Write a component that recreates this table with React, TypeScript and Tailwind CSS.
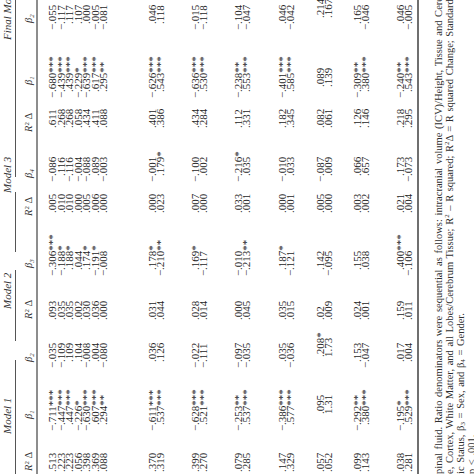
import React from "react";

type Row = string[];

const groups: { mt: string; rows: Row[] }[] = [
  {
    mt: "mt-[10px]",
    rows: [
      [".513", "−.711***", "−.035", ".093", "−.306***", ".005", "−.086", ".611", "−.680***", "−.055"],
      [".223", "−.447***", "−.109", ".035", "−.188*", ".010", ".116", ".268", "−.439***", "−.117"],
      [".223", ".447***", ".109", ".035", ".188*", ".010", "−.116", ".268", ".439***", ".117"],
      [".056", "−.226*", ".104", ".002", ".044", ".000", "−.004", ".058", "−.229*", ".107"],
      [".398", "−.630***", "−.008", ".030", ".174*", ".005", "−.088", ".434", "−.639***", ".000"],
      [".369", ".607***", ".004", ".036", "−.191*", ".006", ".089", ".411", ".617***", "−.005"],
      [".088", ".294**", "−.080", ".000", "−.008", ".000", "−.003", ".088", ".295**", "−.081"],
    ],
  },
  {
    mt: "mt-[40px]",
    rows: [
      [".370", "−.611***", ".036", ".031", ".178*", ".000", "−.001", ".401", "−.626***", ".046"],
      [".319", ".537***", ".126", ".044", "−.210**", ".023", ".179*", ".386", ".543***", ".118"],
    ],
  },
  {
    mt: "mt-[26px]",
    rows: [
      [".399", "−.628***", "−.022", ".028", ".169*", ".007", "−.100", ".434", "−.636***", "−.015"],
      [".270", ".521***", "−.111", ".014", "−.117", ".000", ".002", ".284", ".530***", "−.118"],
    ],
  },
  {
    mt: "mt-[26px]",
    rows: [
      [".079", "−.253**", "−.097", ".000", "−.010", ".033", "−.216*", ".112", "−.238**", "−.104"],
      [".285", ".537***", "−.035", ".045", "−.213**", ".001", ".035", ".331", ".553***", "−.047"],
    ],
  },
  {
    mt: "mt-[27px]",
    rows: [
      [".147", "−.386***", ".035", ".035", ".187*", ".000", "−.010", ".182", "−.401***", ".046"],
      [".329", ".577***", "−.036", ".015", "−.121", ".001", ".033", ".345", ".585***", "−.042"],
    ],
  },
  {
    mt: "mt-[21px]",
    rows: [
      [".057", ".095", ".208*", ".02", ".142", ".005", "−.087", ".082", ".089", ".214*"],
      [".052", "1.31", "1.73", ".009", "−.095", ".000", ".009", ".061", ".139", ".167"],
    ],
  },
  {
    mt: "mt-[20px]",
    rows: [
      [".099", "−.292**", ".153", ".024", ".155", ".003", ".066", ".126", "−.309**", ".165"],
      [".143", ".380***", "−.047", ".001", ".038", ".002", ".657", ".146", ".380***", "−.046"],
    ],
  },
  {
    mt: "mt-[26px]",
    rows: [
      [".038", "−.195*", ".017", ".159", ".400***", ".021", ".173", ".218", "−.240**", ".046"],
      [".281", ".529***", ".004", ".011", "−.106", ".004", "−.073", ".295", ".543***", "−.005"],
    ],
  },
];

// group 6 is set centred rather than on the decimal point
const shifted: Record<number, string> = {
  1: "pl-[11px]",
  2: "pl-[5px]",
  8: "pl-[5px]",
  9: "pl-[6px]",
};

const cols = "grid grid-cols-[47px_63px_42px_50px_57px_37px_48px_36px_68px_40px] -ml-[4px]";

function Num({ value, extra }: { value: string; extra?: string }) {
  const neg = value.startsWith("−");
  return (
    <div className={`flex whitespace-nowrap ${extra ?? ""}`}>
      <span className="w-[6px] shrink-0">{neg ? "−" : ""}</span>
      <span>{neg ? value.slice(1) : value}</span>
    </div>
  );
}

function R2() {
  return (
    <span>
      <i>R</i>
      <sup className="text-[7px]">2</sup> Δ
    </span>
  );
}

function Beta({ n }: { n: number }) {
  return (
    <i>
      β<sub className="text-[7px]">{n}</sub>
    </i>
  );
}

export default function App() {
  const heads = [
    { pl: "pl-[7px]", el: <R2 /> },
    { pl: "pl-[12px]", el: <Beta n={1} /> },
    { pl: "pl-[6px]", el: <Beta n={2} /> },
    { pl: "pl-[7px]", el: <R2 /> },
    { pl: "pl-[8px]", el: <Beta n={3} /> },
    { pl: "pl-[3px]", el: <R2 /> },
    { pl: "pl-[4px]", el: <Beta n={4} /> },
    { pl: "pl-[2px]", el: <R2 /> },
    { pl: "pl-[13px]", el: <Beta n={1} /> },
    { pl: "pl-[7px]", el: <Beta n={2} /> },
  ];

  return (
    <div className="relative h-[474px] w-[474px] overflow-hidden bg-white">
      <div className="h-[474px] w-[474px] origin-top-left -rotate-90 translate-y-[474px] font-['Liberation_Serif','Times_New_Roman',serif] text-[11px] text-[#262626]">
        {/* model titles */}
        <div className="ml-[40px] grid h-[15px] grid-cols-[125px_116px_153px_1fr] items-center italic leading-[15px] text-[#333]">
          <span>Model 1</span>
          <span>Model 2</span>
          <span>Model 3</span>
          <span className="whitespace-nowrap">Final Model</span>
        </div>
        <div className="-ml-[10px] flex h-px">
          <div className="w-[140px] bg-[#555]" />
          <div className="w-[22px]" />
          <div className="w-[80px] bg-[#555]" />
          <div className="w-[20px]" />
          <div className="w-[68px] bg-[#555]" />
          <div className="w-[17px]" />
          <div className="w-[200px] bg-[#555]" />
        </div>

        {/* column heads */}
        <div className={`${cols} h-[20px] pt-[8px] text-[10.5px] leading-[10px] text-[#333]`}>
          {heads.map((h, i) => (
            <div key={i} className={`whitespace-nowrap ${h.pl}`}>
              {h.el}
            </div>
          ))}
        </div>
        <div className="h-[2px] w-[520px] bg-[#8d8d8d]" />

        {/* body */}
        {groups.map((g, gi) => (
          <div key={gi} className={g.mt}>
            {g.rows.map((row, ri) => (
              <div key={ri} className={`${cols} leading-[8.5px]`}>
                {row.map((v, ci) => (
                  <Num key={ci} value={v} extra={gi === 5 ? shifted[ci] : undefined} />
                ))}
              </div>
            ))}
          </div>
        ))}

        <div className="mt-[4px] h-[2px] w-[520px] bg-[#6f6f6f]" />

        {/* note */}
        <div className="mt-[14px] whitespace-nowrap text-[10.5px] leading-[11px] text-[#2e2e2e] [word-spacing:1px]">
          <div>
            pinal fluid. Ratio denominators were sequential as follows: intracranial volume (ICV)/Height, Tissue and Cerebrospinal
          </div>
          <div>
            e, Cortex, White Matter, and all Lobes/Cerebrum Tissue; R<sup className="text-[7px]">2</sup> – R squared; R
            <sup className="text-[7px]">2</sup>Δ = R squared Change; Standardized
          </div>
          <div>
            ic Status, β<sub className="text-[7px]">3</sub> = Sex, and β<sub className="text-[7px]">4</sub> = Gender.
          </div>
          <div>p &lt; .001.</div>
        </div>
      </div>
    </div>
  );
}
